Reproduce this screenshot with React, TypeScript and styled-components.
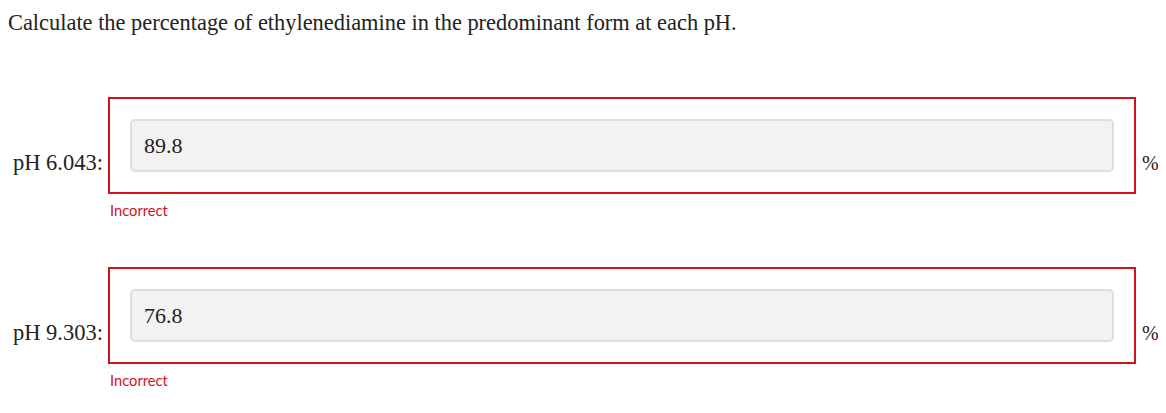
import React from 'react';
import styled, { createGlobalStyle } from 'styled-components';

const GlobalStyle = createGlobalStyle`
  body {
    margin: 8px;
    background: #fff;
    font-family: "Liberation Serif", "Times New Roman", serif;
    color: #222;
  }
`;

const Question = styled.p`
  margin: 2px 0 0 0;
  font-size: 22.4px;
  line-height: 26px;
`;

const AnswerList = styled.div`
  display: flex;
  flex-direction: column;
  gap: 48px;
  margin-top: 61px;
`;

const Row = styled.div`
  display: flex;
  align-items: center;
`;

const Label = styled.div`
  width: 95px;
  padding-left: 5px;
  font-size: 22.5px;
  line-height: 26px;
  margin-top: 10px;
  white-space: nowrap;
`;

const Field = styled.div`
  flex: 1;
  display: flex;
  flex-direction: column;
`;

const Frame = styled.div<{ $wrong?: boolean }>`
  border: 2px solid ${(p) => (p.$wrong ? '#d0121b' : '#ccc')};
  padding: 20px;
`;

const Input = styled.input`
  display: block;
  box-sizing: border-box;
  width: 100%;
  height: 53px;
  padding: 0 12px;
  border: 2px solid #dedede;
  border-radius: 5px;
  background: #f2f2f2;
  font-family: "Liberation Serif", "Times New Roman", serif;
  font-size: 22px;
  color: #222;
  outline: none;
`;

const Feedback = styled.div`
  margin-top: 7px;
  padding-left: 2px;
  font-family: Lato, "Liberation Sans", sans-serif;
  font-size: 14.7px;
  line-height: 18px;
  color: #d0121b;
`;

const Unit = styled.div`
  flex: none;
  width: 16px;
  padding-left: 6px;
  font-size: 20px;
  line-height: 26px;
  margin-top: 10px;
  white-space: nowrap;
`;

type Answer = { label: string; value: string };

const answers: Answer[] = [
  { label: 'pH 6.043:', value: '89.8' },
  { label: 'pH 9.303:', value: '76.8' },
];

const App: React.FC = () => {
  return (
    <>
      <GlobalStyle />
      <Question>
        Calculate the percentage of ethylenediamine in the predominant form at each pH.
      </Question>
      <AnswerList>
        {answers.map((a) => (
          <Row key={a.label}>
            <Label>{a.label}</Label>
            <Field>
              <Frame $wrong>
                <Input defaultValue={a.value} readOnly />
              </Frame>
              <Feedback>Incorrect</Feedback>
            </Field>
            <Unit>%</Unit>
          </Row>
        ))}
      </AnswerList>
    </>
  );
};

export default App;
